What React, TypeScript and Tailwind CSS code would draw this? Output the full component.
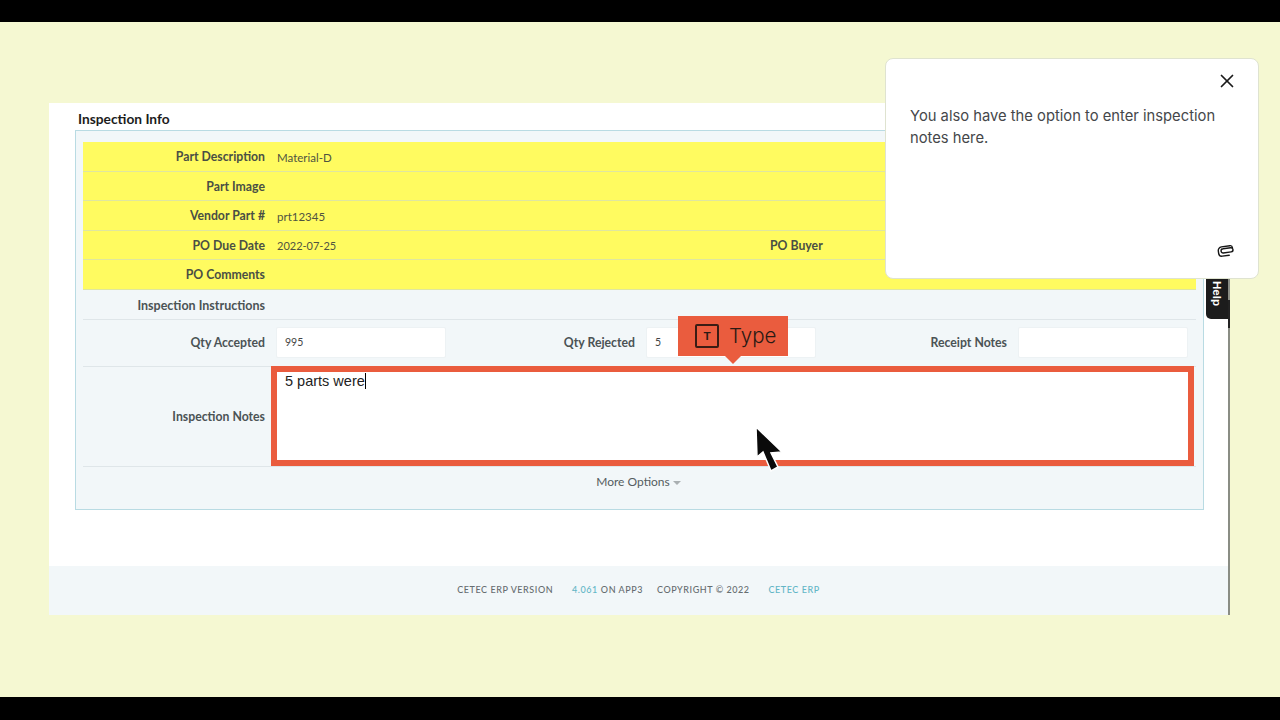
import { X } from 'lucide-react';

const yellowRows = [
  { label: 'Part Description', value: 'Material-D', valueSize: 'text-[11.5px]' },
  { label: 'Part Image', value: '', valueSize: 'text-[11.5px]' },
  { label: 'Vendor Part #', value: 'prt12345', valueSize: 'text-[11.5px]' },
  { label: 'PO Due Date', value: '2022-07-25', valueSize: 'text-[11px]', label2: 'PO Buyer' },
  { label: 'PO Comments', value: '', valueSize: 'text-[11.5px]' },
];

function QtyField({ label, value, labelWidth }: { label: string; value: string; labelWidth: string }) {
  return (
    <>
      <span className={`${labelWidth} shrink-0 text-right text-[12.25px] font-bold text-[#4b5355]`}>{label}</span>
      <div className="ml-[11px] flex h-[31px] w-[170px] shrink-0 items-center rounded-[2px] border border-[#edf2f4] bg-white pl-2 text-[10.5px] text-[#444]">
        {value}
      </div>
    </>
  );
}

export default function App() {
  return (
    <div className="relative flex h-[720px] w-[1280px] flex-col overflow-hidden bg-[#f5f8d2] font-['Lato','Noto_Sans',sans-serif]">
      <div className="h-[22px] bg-black" />

      <div className="flex-1 pl-[49px] pt-[81px]">
        <div className="flex h-[512px] w-[1181px] flex-col border-r-2 border-[#8a8d84] bg-white">
          <h2 className="pl-[29px] pt-[7px] text-[13.75px] leading-[17px] font-bold text-[#1c1c1c]">Inspection Info</h2>

          <div className="ml-[26px] mt-[3px] h-[380px] w-[1129px] border border-[#b9dbe3] bg-[#f2f7f9] px-[7px] pt-[11px]">
            {yellowRows.map((row) => (
              <div key={row.label} className="flex h-[29.6px] items-center border-b border-[#dfe6a0] bg-[#fffb60] pt-[2px] last:border-[#e4e8ac]">
                <span className="w-[182px] shrink-0 text-right text-[12.25px] font-bold text-[#4a4f44]">{row.label}</span>
                <span className={`ml-3 w-[400px] ${row.valueSize} text-[#4f5340]`}>{row.value}</span>
                {row.label2 ? <span className="ml-[93px] text-[12.25px] font-bold text-[#4a4f44]">{row.label2}</span> : null}
              </div>
            ))}

            <div className="flex h-[30px] items-center border-b border-[#dfe6e9] pt-[3px]">
              <span className="w-[182px] shrink-0 text-right text-[12.5px] font-bold text-[#4b5355]">Inspection Instructions</span>
            </div>

            <div className="flex h-[47px] items-center border-b border-[#dfe6e9]">
              <QtyField label="Qty Accepted" value="995" labelWidth="w-[182px]" />
              <QtyField label="Qty Rejected" value="5" labelWidth="w-[189px]" />
              <QtyField label="Receipt Notes" value="" labelWidth="w-[191px]" />
            </div>

            <div className="flex h-[100px] items-center border-b border-[#dfe6e9] pt-px">
              <span className="w-[182px] shrink-0 text-right text-[12.25px] font-bold text-[#4b5355]">Inspection Notes</span>
              <div className="ml-[6px] h-[100px] w-[923px] -translate-y-px border-[6px] border-[#ea5c3e] bg-white pl-[8px] pt-[1px] font-['Liberation_Sans',sans-serif] text-[14.5px] leading-[17px] text-[#222]">
                5 parts were<span className="border-r border-black" />
              </div>
            </div>

            <div className="flex items-center justify-center pl-[6px] pr-[8px] pt-[7px] text-[12px] leading-[16px] text-[#555d5f]">
              More Options
              <span className="ml-[3px] mt-[2px] border-x-[4px] border-t-[4px] border-x-transparent border-t-[#aab0b2]" />
            </div>
          </div>

          <div className="mt-[56px] flex h-[50px] flex-1 items-center justify-center bg-[#f2f7f9] pb-[2px] text-[9px] font-medium tracking-[0.55px] text-[#666d70]">
            <span>CETEC ERP VERSION</span>
            <span className="ml-[19px] text-[#62b6c6]">4.061</span>
            <span className="ml-[3px]">ON APP3</span>
            <span className="ml-[14px]">COPYRIGHT © 2022</span>
            <span className="ml-[19px] text-[#62b6c6]">CETEC ERP</span>
          </div>
        </div>
      </div>

      <div className="h-[23px] bg-black" />

      <div className="absolute left-[1206px] top-[278px] flex h-[41px] w-[22px] justify-center rounded-bl-[5px] bg-[#1c1c1c] pt-[3px]">
        <span className="font-['Liberation_Sans',sans-serif] text-[11.5px] leading-[22px] font-bold text-white [writing-mode:vertical-rl]">Help</span>
      </div>
      <div className="absolute left-[1228px] top-[300px] h-[28px] w-[2px] bg-[#222]" />

      <div className="absolute left-[885px] top-[58px] h-[221px] w-[374px] rounded-[8px] border border-[#dfe3d0] bg-white">
        <X className="absolute left-[330px] top-[11px] h-[22px] w-[22px] text-[#1a1a1a]" strokeWidth={1.9} />
        <p className="pl-[24px] pt-[46px] font-['Inter',sans-serif] text-[14.75px] leading-[22px] text-[#45474a]">
          You also have the option to enter inspection
          <br />
          notes here.
        </p>
        <svg className="absolute left-[331px] top-[185px]" width="18" height="14" viewBox="0 0 18 14" fill="none" stroke="#151515" strokeWidth="1.4" strokeLinecap="round">
          <g transform="rotate(-8 9 7)">
            <path d="M15.8 4.5a2.2 2.2 0 0 0-2.2-2.2H5A3.6 3.6 0 0 0 1.4 6v2.4A3.2 3.2 0 0 0 4.6 11.6h7" />
            <path d="M6 8.6h8a2.1 2.1 0 0 0 0-4.2H6.4a1.5 1.5 0 0 0-.4 4.2" />
          </g>
        </svg>
      </div>

      <div className="absolute left-[678px] top-[316px] flex h-[40px] w-[110px] items-center gap-[10px] bg-[#ea5c3e] pl-[17px] text-[#2a1a14]">
        <div className="flex h-[24px] w-[24px] items-center justify-center rounded-[2px] border-2 border-[#3a1c14] text-[12px] font-bold">T</div>
        <span className="font-['Inter',sans-serif] text-[20.5px] leading-[24px] font-light">Type</span>
      </div>
      <div className="absolute left-[725px] top-[356px] h-0 w-0 border-x-[8px] border-t-[8px] border-x-transparent border-t-[#ea5c3e]" />

      <svg className="absolute left-[752px] top-[424px]" width="32" height="50" viewBox="0 0 32 50">
        <path d="M4 3 L5 33 L11 28 L19 47 L26 43 L19 29 L30 28 Z" fill="#0a0a0a" stroke="#fff" strokeWidth="1.5" />
      </svg>
    </div>
  );
}
